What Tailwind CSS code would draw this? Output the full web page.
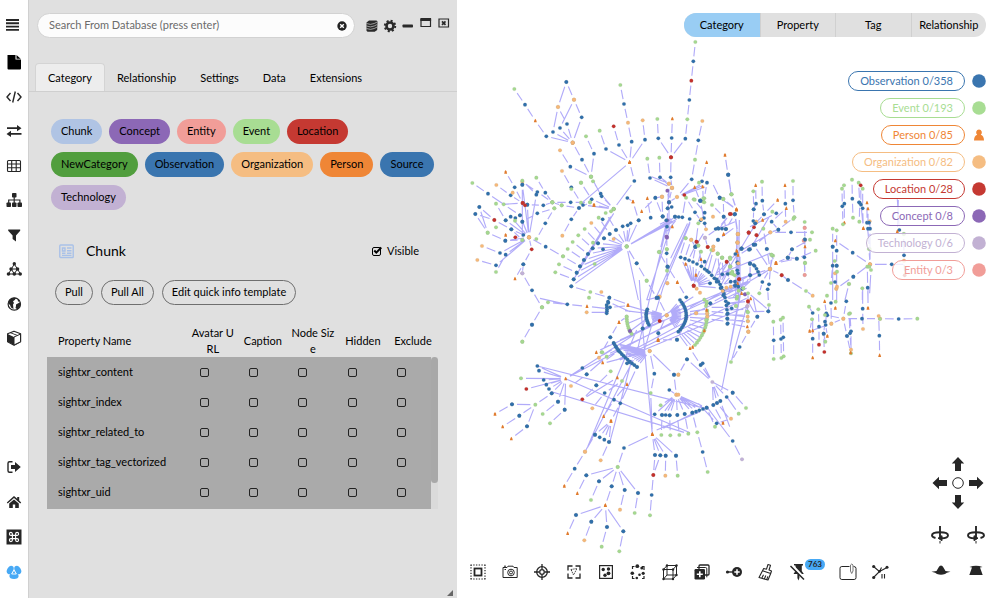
<!DOCTYPE html>
<html lang="en">
<head>
    <meta charset="UTF-8">
    <meta name="viewport" content="width=device-width, initial-scale=1.0">
    <title>Graph Explorer</title>
    <script src="https://cdn.jsdelivr.net/npm/@tailwindcss/browser@4"></script>
</head>
<body class="font-['Lato',sans-serif] text-[11px] text-black bg-white">
    <div class="flex h-screen overflow-hidden">

        <!-- icon rail -->
        <nav class="w-[29px] shrink-0 flex flex-col justify-between bg-white border-r border-[#d0d0d0] pt-4 pb-[17px] text-[#262626]">
            <div class="flex flex-col items-center gap-[19px]">
                <button aria-label="Menu" class="-ml-1"><svg class="size-[18px]" viewBox="0 0 18 18" stroke="currentColor" stroke-width="1.9"><path d="M3 4h13M3 7.300h13M3 10.600h13M3 13.900h13"/></svg></button>
                <div class="flex flex-col items-center justify-between h-[294px]">
                    <button aria-label="New file" class="text-black"><svg class="size-[18px]" viewBox="0 0 18 18" fill="currentColor"><path d="M2.500 2h8v4.500H16V15.500a1 1 0 0 1-1 1H3.500a1 1 0 0 1-1-1zM11.500 2l4.200 3.700H11.500z"/></svg></button>
                    <button aria-label="Code"><svg class="size-[18px]" viewBox="0 0 18 18" fill="none" stroke="currentColor" stroke-width="1.400"><path d="M5.500 5L2 9l3.500 4M12.500 5L16 9l-3.500 4M10.300 3.500L7.700 14.500"/></svg></button>
                    <button aria-label="Exchange"><svg class="size-[18px]" viewBox="0 0 18 18" fill="currentColor"><path d="M2 5.300h10V3l4.500 3.200L12 9.200V7H2zM16.500 11H6V8.800l-4.500 3.100L6 15v-2.300h10.500z"/></svg></button>
                    <button aria-label="Table"><svg class="size-[18px]" viewBox="0 0 18 18" fill="none" stroke="currentColor" stroke-width="1.100"><rect x="2.500" y="3.500" width="13" height="11" rx="1"/><path d="M2.500 7h13M2.500 10.700h13M6.700 3.500v11M11.200 3.500v11"/></svg></button>
                    <button aria-label="Hierarchy"><svg class="size-[18px]" viewBox="0 0 18 18" fill="currentColor"><rect x="7" y="2" width="4.500" height="4.500" rx=".8"/><rect x="1.500" y="11.500" width="4.500" height="4.500" rx=".8"/><rect x="7" y="11.500" width="4.500" height="4.500" rx=".8"/><rect x="12.500" y="11.500" width="4.500" height="4.500" rx=".8"/><path d="M3.700 12V9h11.200v3M9.200 6v6" fill="none" stroke="currentColor" stroke-width="1.200"/></svg></button>
                    <button aria-label="Filter"><svg class="size-[18px]" viewBox="0 0 18 18" fill="currentColor"><path d="M3.200 3.500h12v1.200L11 9.500v6L7.600 13V9.500L3.200 4.700z"/></svg></button>
                    <button aria-label="Network"><svg class="size-[18px]" viewBox="0 0 18 18" fill="currentColor"><path d="M9.300 4L3.500 14h12L9.300 4M6.300 9h6l-3 5z" fill="none" stroke="currentColor" stroke-width="1"/><circle cx="9.300" cy="3.700" r="1.700"/><circle cx="6" cy="9" r="1.700"/><circle cx="12.600" cy="9" r="1.700"/><circle cx="3.500" cy="14" r="1.800"/><circle cx="9.300" cy="14" r="1.800"/><circle cx="15.200" cy="14" r="1.800"/></svg></button>
                    <button aria-label="World"><svg class="size-[18px]" viewBox="0 0 18 18"><circle cx="9.300" cy="9" r="6.200" fill="none" stroke="currentColor" stroke-width="1.200"/><path fill="currentColor" d="M3.300 8.500C3.500 4.500 7 2.300 11 3L9.800 5 8 6.200 9 8 8 9.500 8.500 14 6 12.500 5 10zM11 9.500L15.500 7v3.500l-3 4-2-1.500.5-2zM12.500 3.500l2.500 2.500-2 .8z"/></svg></button>
                    <button aria-label="Cube"><svg class="size-[18px]" viewBox="0 0 18 18"><path d="M9 2.200L15.600 4.800v8L9 16.200 2.600 12.800v-8z" fill="#fff" stroke="currentColor" stroke-width="1.200" stroke-linejoin="round"/><path d="M9 8l6.500-2.900v7.700L9 16z" fill="#fff" stroke="currentColor"/><path fill="currentColor" d="M2.600 5L9 8v8l-6.400-3.400zM5 4l6.500 2.500 1-.5L6 3.500z"/></svg></button>
                </div>
            </div>
            <div class="flex flex-col items-center gap-[17px]">
                <button aria-label="Sign out"><svg class="size-[18px]" viewBox="0 0 18 18"><path d="M7.500 3.700H4.500Q3 3.700 3 5.200v7.600q0 1.500 1.500 1.500h3" fill="none" stroke="currentColor" stroke-width="1.400"/><path fill="currentColor" d="M6 7h4V4l5.800 5L10 14v-3H6z"/></svg></button>
                <button aria-label="Home"><svg class="size-[18px]" viewBox="0 0 18 18" fill="currentColor"><path d="M9 3l3.200 2.800V4h2v3.600l2 1.800-.9 1L9 5 2.700 10.400l-.9-1z"/><path d="M4.200 10.500L9 6.400l4.800 4.100V15h-3.600v-3.500H7.800V15H4.200z"/></svg></button>
                <button aria-label="Shortcuts"><svg class="size-[18px]" viewBox="0 0 18 18"><path fill="currentColor" d="M1.500 1.500h15v15h-15z"/><path d="M7.400 7.400h3.200v3.200H7.400zM7.400 7.400H5.900a1.500 1.500 0 1 1 1.500-1.500zM10.600 7.400V5.900a1.500 1.500 0 1 1 1.500 1.500zM10.600 10.600h1.500a1.500 1.500 0 1 1-1.500 1.500zM7.400 10.600v1.500a1.500 1.500 0 1 1-1.500-1.500z" fill="none" stroke="#fff" stroke-width="1.100"/></svg></button>
                <button aria-label="Assistant" class="text-[#47a9f5]"><svg class="size-[18px]" viewBox="0 0 18 18"><g fill="currentColor"><ellipse cx="5.200" cy="7" rx="3" ry="4.500" transform="rotate(28 5.200 7)"/><ellipse cx="12.800" cy="7" rx="3" ry="4.500" transform="rotate(-28 12.800 7)"/><ellipse cx="9" cy="13" rx="4.600" ry="2.900"/></g><path d="M9 7l2.300 4H6.700z" fill="currentColor" stroke="#fff" stroke-width=".9"/></svg></button>
            </div>
        </nav>

        <!-- side panel -->
        <section class="relative w-[428px] shrink-0 bg-[#e0e0e0]">
            <div class="flex items-center pl-2 pr-[6px] pt-[13px]">
                <div class="flex items-center flex-1 h-[25px] rounded-full bg-[#fcfcfc] border border-[#d2d2d2] pl-[11px] pr-[7px]">
                    <input type="text" aria-label="Search" placeholder="Search From Database (press enter)" class="flex-1 outline-none bg-transparent placeholder:text-[#6b6b6b]">
                    <button aria-label="Clear"><svg class="size-[10px]" viewBox="0 0 10 10"><circle cx="5" cy="5" r="4.700" fill="#222"/><path d="M3.200 3.200l3.600 3.600M6.800 3.200L3.200 6.800" stroke="#fff" stroke-width="1.400"/></svg></button>
                </div>
                <div class="flex items-center gap-1 ml-[10px] text-[#2a2a2a]">
                    <button aria-label="Databases"><svg class="size-[14px]" viewBox="0 0 14 14"><path fill="currentColor" d="M1.500 3.500L4 1.500h7.500l1 1-.3 8.500-2.500 1.800H2.500l-1-1z"/><path d="M1.500 4.500q4 1.800 7.700 0l3-1.500M1.500 7q4 1.800 7.700 0l3-1.500M1.500 9.500q4 1.800 7.700 0l3-1.500" fill="none" stroke="#ccc" stroke-width=".7"/></svg></button>
                    <button aria-label="Settings"><svg class="size-[14px]" viewBox="0 0 14 14"><circle cx="7" cy="7" r="3.500" fill="none" stroke="currentColor" stroke-width="2.600"/><circle cx="7" cy="7" r="5.200" fill="none" stroke="currentColor" stroke-width="2" stroke-dasharray="2.040 2.040"/></svg></button>
                    <button aria-label="Minimize"><svg class="size-[14px]" viewBox="0 0 14 14"><rect x="1.500" y="5.500" width="10.500" height="3" rx=".8" fill="currentColor"/></svg></button>
                    <button aria-label="Maximize" class="pb-[6px]"><svg class="size-[14px]" viewBox="0 0 14 14"><path d="M2 3.500h9.500v7H2z" fill="none" stroke="currentColor" stroke-width="1.200"/><path d="M1.400 3.500h10.700" stroke="currentColor" stroke-width="3"/></svg></button>
                    <button aria-label="Close" class="pb-[6px]"><svg class="size-[14px]" viewBox="0 0 14 14"><path d="M2 3h9.500v8H2z" fill="none" stroke="currentColor" stroke-width="1.200"/><path d="M5 5.300l3.500 3.500M8.500 5.300L5 8.800" stroke="currentColor" stroke-width="1.700"/></svg></button>
                </div>
            </div>

            <div role="tablist" class="flex mt-[25px] pl-[6px] border-b border-[#cfcfcf]">
                <button role="tab" aria-selected="true" class="h-7 px-3 pt-px -mb-px rounded-t bg-[#ededed] border border-b-0 border-[#d4d4d4]">Category</button>
                <button role="tab" class="h-7 px-3 pt-[2px]">Relationship</button>
                <button role="tab" class="h-7 px-3 pt-[2px]">Settings</button>
                <button role="tab" class="h-7 px-3 pt-[2px]">Data</button>
                <button role="tab" class="h-7 px-3 pt-[2px]">Extensions</button>
            </div>

            <div class="flex flex-wrap gap-x-[7px] gap-y-2 mt-[27px] pl-[22px] pr-4">
                <button class="h-[25px] px-[10px] rounded-full bg-[#b0c4e4]">Chunk</button>
                <button class="h-[25px] px-[10px] rounded-full bg-[#8c68b6]">Concept</button>
                <button class="h-[25px] px-[10px] rounded-full bg-[#f19d98]">Entity</button>
                <button class="h-[25px] px-[10px] rounded-full bg-[#a8dd93]">Event</button>
                <button class="h-[25px] px-[10px] rounded-full bg-[#c53932]">Location</button>
                <button class="h-[25px] px-[10px] rounded-full bg-[#519e3e]">NewCategory</button>
                <button class="h-[25px] px-[10px] rounded-full bg-[#3a75af]">Observation</button>
                <button class="h-[25px] px-[10px] rounded-full bg-[#f5bd82]">Organization</button>
                <button class="h-[25px] px-[10px] rounded-full bg-[#ef8636]">Person</button>
                <button class="h-[25px] px-[10px] rounded-full bg-[#3a75af]">Source</button>
                <button class="h-[25px] px-[10px] rounded-full bg-[#c2b1d3]">Technology</button>
            </div>

            <div class="flex items-center justify-between mt-[31px] pl-[30px] pr-[38px]">
                <div class="flex items-center gap-3">
                    <svg class="size-[15px]" viewBox="0 0 15 15" fill="none" stroke="#a9c1e8" stroke-width="1.400"><rect x=".8" y="1" width="13.400" height="12.500" rx=".8"/><path d="M3.500 4h2.500v3H3.500zM8 4h4.500M8 6.800h4.500M3 9.300h3.500M8 9.300h4.500M3 11.400h9.500"/></svg>
                    <h2 class="text-[14px] leading-5">Chunk</h2>
                </div>
                <label class="relative flex items-center gap-[6px]">
                    <input type="checkbox" checked class="appearance-none size-[9px] rounded-xs border border-black">
                    <svg class="absolute left-0 top-[3px] size-[10px]" viewBox="0 0 10 10"><path d="M2.300 4.500l2 2.200L9.300 1.500" fill="none" stroke="#000" stroke-width="1.900"/></svg>
                    Visible
                </label>
            </div>

            <div class="flex gap-2 mt-[19px] pl-[26px]">
                <button class="h-[25px] px-[9px] rounded-full border border-[#6f6f6f]">Pull</button>
                <button class="h-[25px] px-[9px] rounded-full border border-[#6f6f6f]">Pull All</button>
                <button class="h-[25px] px-[9px] rounded-full border border-[#6f6f6f]">Edit quick info template</button>
            </div>

            <div class="relative mt-5 ml-[18px] mr-[19px]">
                <table class="block">
                    <thead class="block">
                        <tr class="flex items-center leading-4">
                            <th class="w-[36%] pl-[11px] text-left font-normal">Property Name</th>
                            <th class="w-[12.8%] px-[3px] font-normal break-all">Avatar URL</th>
                            <th class="w-[12.8%] px-[3px] font-normal break-all">Caption</th>
                            <th class="w-[12.8%] px-[3px] font-normal break-all">Node Size</th>
                            <th class="w-[12.8%] px-[3px] font-normal break-all">Hidden</th>
                            <th class="w-[12.8%] font-normal">Exclude</th>
                        </tr>
                    </thead>
                    <tbody id="props" class="block h-[152px] overflow-hidden mr-[7px] bg-[#aaaaaa]"></tbody>
                </table>
                <div class="absolute right-0 bottom-0 w-[7px] h-[152px] bg-[#dadada]">
                    <div class="h-[126px] rounded-full bg-[#a8a8a8]"></div>
                </div>
            </div>

            <svg class="absolute right-1 bottom-[2px] size-[6px]" viewBox="0 0 6 6"><path d="M6 0v6H0z" fill="#666"/></svg>
        </section>

        <!-- graph view -->
        <main class="relative flex-1 flex flex-col justify-between">
            <svg id="graph" class="absolute inset-0 size-full" viewBox="-9 0 1629 1794" preserveAspectRatio="xMinYMin meet"></svg>

            <div class="relative flex flex-col items-end pt-[13px] pr-[14px]">
                <div class="grid grid-cols-4 w-[302px] h-6 rounded-full overflow-hidden bg-[#e0e0e0]">
                    <button class="bg-[#99cdf4]">Category</button>
                    <button class="border-l border-[#d0d0d0]">Property</button>
                    <button class="border-l border-[#d0d0d0]">Tag</button>
                    <button class="border-l border-[#d0d0d0]">Relationship</button>
                </div>
                <ul id="legend" class="flex flex-col items-end gap-[7px] mt-[34px] leading-[18px]"></ul>
            </div>

            <div class="relative flex items-end justify-between pl-[5px] pr-[15px] pb-[17px] text-[#262626]">
                <div class="flex items-center">
                    <button aria-label="Select area" class="w-8 flex justify-center"><svg class="size-[18px]" viewBox="0 0 18 18" fill="none" stroke="currentColor"><path d="M1.500 2h15M1.500 16h15M2 1.500v15M16 1.500v15" stroke-width="1.200" stroke-dasharray="1.400 1.320"/><rect x="5.500" y="5.500" width="7" height="7" stroke-width="1.800"/></svg></button>
                    <button aria-label="Snapshot" class="w-8 flex justify-center"><svg class="size-[18px]" viewBox="0 0 18 18" fill="none" stroke="currentColor"><path d="M2 4.500h4l1-1.300h5l1 1.300h3.200v10H2z"/><path d="M3 3.200h2"/><circle cx="10" cy="9.500" r="3.300"/><circle cx="10" cy="9.500" r="1.500"/><path d="M3.500 6.500h1.500"/></svg></button>
                    <button aria-label="Center" class="w-8 flex justify-center"><svg class="size-[18px]" viewBox="0 0 18 18" fill="none" stroke="currentColor" stroke-width="1.300"><circle cx="9" cy="9" r="5.300"/><circle cx="9" cy="9" r="2.300"/><path d="M9 1v5M9 12v5M1 9h5M12 9h5"/></svg></button>
                    <button aria-label="Fit selection" class="w-8 flex justify-center"><svg class="size-[18px]" viewBox="0 0 18 18" fill="none" stroke="currentColor" stroke-width="1.300"><path d="M7.500 3H3v4.500M10.500 3H15v4.500M7.500 15H3v-4.500M10.500 15H15v-4.500"/><path d="M6 6.500l6-1-3.500 6.500zM6 6.500l1 2" stroke-width=".8" stroke-dasharray="1.500 .7"/></svg></button>
                    <button aria-label="Fit graph" class="w-8 flex justify-center"><svg class="size-[18px]" viewBox="0 0 18 18" fill="none" stroke="currentColor" stroke-width="1.200"><rect x="2.600" y="2.600" width="12.800" height="12.800"/><g fill="currentColor" stroke="none"><circle cx="6.200" cy="6.500" r="1.700"/><circle cx="11.500" cy="6" r="1.700"/><circle cx="11.500" cy="10.300" r="1.900"/><circle cx="8" cy="12.200" r="1.700"/></g></svg></button>
                    <button aria-label="Expand selection" class="w-8 flex justify-center"><svg class="size-[18px]" viewBox="0 0 18 18" fill="none" stroke="currentColor" stroke-width="1.200"><path d="M5.500 3.500H3.500V6M13 3.500h2V7M5.500 15.500H3.500v-2.500M13 15.500h2V13"/><g fill="currentColor" stroke="none"><circle cx="8.300" cy="3.200" r="1.900"/><circle cx="12.800" cy="5" r="1.500"/><circle cx="3.300" cy="10.300" r="1.800"/><circle cx="14.200" cy="10.300" r="1.600"/><circle cx="7.800" cy="15" r="1.300"/><circle cx="10.500" cy="11.800" r="1.300"/></g></svg></button>
                    <button aria-label="3D view" class="w-8 flex justify-center"><svg class="size-[18px]" viewBox="0 0 18 18" fill="none" stroke="currentColor" stroke-width="1"><path d="M2.500 6.500h9.500V16H2.500zM6 2.500h9.500V12H6zM2.500 6.500L6 2.500M12 6.500l3.500-4M12 16l3.500-4M2.500 16L6 12"/><g fill="currentColor" stroke="none"><circle cx="2.500" cy="6.500" r="1.200"/><circle cx="12" cy="6.500" r="1.200"/><circle cx="2.500" cy="16" r="1.200"/><circle cx="12" cy="16" r="1.200"/><circle cx="6" cy="2.500" r="1.200"/><circle cx="15.500" cy="2.500" r="1.200"/><circle cx="15.500" cy="12" r="1.200"/></g></svg></button>
                    <button aria-label="Duplicate" class="w-8 flex justify-center"><svg class="size-[18px]" viewBox="0 0 18 18" fill="none" stroke="currentColor" stroke-width="1.300"><rect x="6" y="2" width="10" height="10" rx="1" fill="#fff"/><path d="M4 4.500h8.500q1.300 0 1.300 1.300v8.500" stroke-width="1"/><rect x="1.500" y="6" width="10.500" height="10.500" rx="1.200" fill="currentColor" stroke="none"/><path d="M6.800 8.300v6M3.800 11.300h6" stroke="#fff" stroke-width="1.600"/></svg></button>
                    <button aria-label="Add node" class="w-8 flex justify-center"><svg class="size-[18px]" viewBox="0 0 18 18"><circle cx="2.500" cy="9" r="1.600" fill="currentColor"/><path d="M2 9h6" stroke="currentColor" stroke-width="1.400"/><circle cx="12" cy="9" r="5" fill="currentColor"/><path d="M12 6.300v5.400M9.300 9h5.400" stroke="#fff" stroke-width="1.500"/></svg></button>
                    <button aria-label="Clean up" class="w-8 flex justify-center"><svg class="size-[18px]" viewBox="0 0 18 18" fill="none" stroke="currentColor" stroke-width="1.100" stroke-linejoin="round"><path d="M11 1.500l2.500.8L12 7l2.500 1-.8 2.500-8.200-2.800 1.200-2.200L9.500 6.200zM5.500 7.700L2 14.500l9 2.500 2.700-6.500M5 14.800l1.500-3M7.500 15.500l1.300-3M9.800 16.300l1-3"/></svg></button>
                    <button aria-label="Unpin" class="relative w-8 flex justify-center"><svg class="size-[18px]" viewBox="0 0 18 18"><path fill="currentColor" d="M5 1h9v1.500h-1.200V8l2 3H10.400v4l-1 2.500-1-2.500v-4H4.500l2-3V2.500H5z"/><path d="M3 2L16.500 16.500" stroke="#fff" stroke-width="2.400"/><path d="M1.500 3L15 16.500" stroke="currentColor" stroke-width="1.500"/></svg>
                        <span class="absolute left-[23px] -top-1 px-[3px] h-[11px] rounded-full bg-[#47a9f5] text-[8px] leading-[11px] font-bold">763</span>
                    </button>
                    <button aria-label="Note" class="w-8 ml-[18px] flex justify-center"><svg class="size-[18px]" viewBox="0 0 18 18" fill="none" stroke="currentColor"><path d="M10.500 3.500H2.800q-1.800 0-1.800 1.800v9.400q0 1.800 1.800 1.800h12.400q1.800 0 1.800-1.800V5.300q0-1.800-2.500-1.800"/><path d="M11.500 2v6l1.200 2.500L14 8V2q-1.200-2-2.500 0z" stroke="#777" stroke-width="1"/></svg></button>
                    <button aria-label="Pause layout" class="w-8 flex justify-center"><svg class="size-[18px]" viewBox="0 0 18 18" stroke="currentColor" stroke-width="1.100"><path d="M2.500 3.500L8.500 8.500 2.500 14.500M8.500 8.500L16 4.500M8.500 8.500l2-4M11 11v4.500M13.500 11v4.500" fill="none"/><g fill="currentColor" stroke="none"><circle cx="2.700" cy="3.500" r="1.600"/><circle cx="2.700" cy="14.500" r="1.600"/><circle cx="16" cy="4.300" r="1.500"/><circle cx="8.500" cy="8.500" r="1.300"/></g></svg></button>
                </div>

                <div class="w-[54px] flex flex-col">
                    <div class="grid grid-cols-3 gap-y-px justify-items-center items-center">
                        <button aria-label="Pan up" class="col-start-2"><svg class="size-[18px]" viewBox="0 0 18 18" fill="currentColor"><path d="M9 2l6.200 6.500H12V16H6V8.500H2.800z"/></svg></button>
                        <button aria-label="Pan left" class="col-start-1"><svg class="size-[18px]" viewBox="0 0 18 18" fill="currentColor"><path d="M1.500 9L8 2.800V6h8v6H8v3.200z"/></svg></button>
                        <button aria-label="Reset view"><svg class="size-[14px]" viewBox="0 0 14 14"><circle cx="7" cy="7" r="5.300" fill="#fff" stroke="currentColor"/></svg></button>
                        <button aria-label="Pan right"><svg class="size-[18px]" viewBox="0 0 18 18" fill="currentColor"><path d="M16.500 9L10 2.800V6H2v6h8v3.200z"/></svg></button>
                        <button aria-label="Pan down" class="col-start-2"><svg class="size-[18px]" viewBox="0 0 18 18" fill="currentColor"><path d="M9 16L2.800 9.500H6V2h6v7.500h3.200z"/></svg></button>
                    </div>
                    <div class="flex justify-between mt-[15px]">
                        <button aria-label="Rotate left"><svg class="size-[18px]" viewBox="0 0 18 18" fill="none" stroke="currentColor" stroke-width="1.900"><path d="M9 0v13"/><path d="M4.500 12Q1 11 1 9.200C1 7 5 6.200 9 6.200s8 .8 8 3-3 3-6.500 3"/><path d="M7 12.200l4-2.500v5zM9 15v2.500" fill="currentColor" stroke-width="1"/></svg></button>
                        <button aria-label="Rotate right"><svg class="size-[18px]" viewBox="0 0 18 18" fill="none" stroke="currentColor" stroke-width="1.900"><path d="M9 0v13"/><path d="M13.500 12Q17 11 17 9.200C17 7 13 6.200 9 6.200s-8 .8-8 3 3 3 6.500 3"/><path d="M11 12.200l-4-2.500v5zM9 15v2.500" fill="currentColor" stroke-width="1"/></svg></button>
                    </div>
                    <div class="flex justify-between mt-[19px]">
                        <button aria-label="Tilt down"><svg class="h-[18px] w-[20px]" viewBox="0 0 20 18" fill="currentColor"><path d="M10 2.500q1.500 0 2.300 1.800L14.500 8l5 .8q-4.500 1-5.500 2.200-4 1.500-8 0Q5 9.800.5 8.800L5.500 8l2.200-3.700Q8.500 2.500 10 2.500z"/></svg></button>
                        <button aria-label="Tilt up"><svg class="size-[18px]" viewBox="0 0 18 18" fill="currentColor"><path d="M2.500 4Q9 1.500 15.500 4l-2.500.6 2.700 7.400H2.300l2.700-7.400z"/></svg></button>
                    </div>
                </div>
            </div>
        </main>
    </div>

    <script>
        const colors = {
            b: '#2f6fab', g: '#a5d98f', o: '#f6b878', p: '#e07a2c',
            r: '#c4302b', c: '#8560b5', t: '#c2b1d8', e: '#ef9a96'
        };

        // legend
        const legend = [
            ['Observation', '0/358', '#3a75af'],
            ['Event', '0/193', '#a8dd93'],
            ['Person', '0/85', '#ef8636'],
            ['Organization', '0/82', '#f5bd82'],
            ['Location', '0/28', '#c53932'],
            ['Concept', '0/8', '#8c68b6'],
            ['Technology', '0/6', '#c2b1d3'],
            ['Entity', '0/3', '#f19d98']
        ];
        document.getElementById('legend').innerHTML = legend.map(([name, count, color]) => {
            const icon = name === 'Person'
                ? '<path d="M7 1.500a3 3 0 0 1 1.800 5.300Q12 8 12 12.500H2Q2 8 5.200 6.800A3 3 0 0 1 7 1.500z"/>'
                : '<circle cx="7" cy="7" r="6.800"/>';
            return `<li class="flex items-center gap-[7px]">
                <button class="px-[11px] rounded-full border bg-white/80" style="color:${color};border-color:${color}">${name} ${count}</button>
                <svg class="size-[14px]" viewBox="0 0 14 14" fill="${color}">${icon}</svg>
            </li>`;
        }).join('');

        // property rows
        const props = ['sightxr_content', 'sightxr_index', 'sightxr_related_to', 'sightxr_tag_vectorized', 'sightxr_uid'];
        const flags = ['Avatar URL', 'Caption', 'Node Size', 'Hidden', 'Exclude'];
        document.getElementById('props').innerHTML = props.map(name => `
            <tr class="flex items-center h-[30px] pr-[5px]">
                <td class="w-[35%] pl-[11px]">${name}</td>
                ${flags.map(f => `<td class="w-[13%] flex justify-center"><input type="checkbox" aria-label="${name} ${f}" class="appearance-none size-[9px] rounded-xs border border-[#222]"></td>`).join('')}
            </tr>`).join('');

        // Graph data: "a b c" is a chain, "hub > a b c" is a fan, "* a b" are loose nodes.
        // Tokens are type + x,y; ~type:count:start:control:end puts nodes along a curve, x is a point without a node.
        const clusters = [
            { at: [0, 0], data: `
                g163,267 b195,314 p226,362 b259,409 o338,428
                b319,246 o294,321 b279,396 o338,428
                b319,246 o342,299 b365,352 o338,428
                o342,299 b300,384 o338,428
                o294,321 b321,372 o338,428 b366,479 g393,530 b425,589 g461,627
                g378,409 b402,461 g393,530
                o300,451 b331,500 g393,530
                g481,255 b492,312 o504,368 b515,425 p509,487 b523,543 g461,627
                g419,392 b438,447 p509,487 x370,605
                r461,379 b477,435 p509,487
                o548,361 b555,419 p509,487
                g592,357 b595,415 r633,472
                p637,356 b635,414 r633,472 b632,532 o636,564
                g706,126 b700,184 r694,242 b688,300 g682,358 b676,416 r633,472
                o727,363 b715,421 g705,479 b695,538 o651,591
                g562,476 b570,534 o636,564
                g598,473 b600,532 o636,564
                o306,513 b334,562 g363,608
                g363,548 b395,598 g461,627
                g399,544 b422,581 g461,627
                g305,616 b357,624 g390,607
                b369,615 g461,627
                p402,615 g461,627
                o307,707 b334,658 b357,624
                g500,739 > b334,859 b341,838 b350,818 b360,799 b372,780 b384,762 b398,745 b414,730 b432,715 b449,702 b468,690 b488,679 b503,676 b512,670 b536,661 x640,655 x636,662 x632,668
                g286,817 b341,838
                g297,793 b350,818
                g309,769 b360,799
                g323,747 b372,780
                g338,726 b384,762
                g355,706 b398,745
                g374,687 b414,730
                o394,669 b432,715
                g416,653 b449,702
                g437,639 b468,690
                x461,640 x341,838
                x452,650 x360,799
                b334,859 g391,876 b448,893
                g500,739 b530,790 g560,842 b590,893
                g500,739 x535,900
                p519,605 b536,661
                b502,594 p519,605
                p545,634 b586,594 o606,590
                p562,595 b572,653
                o606,590 b608,650
                p740,487 b726,544
                p795,465 b804,524 x813,580
                * g363,548 b428,658 b429,748 o461,717 g404,792 g399,728 g453,634 g334,567 p402,615 g387,893 o424,876
                g597,756 b622,800 o622,850
                o598,890 x560,900 x632,680
                x585,900 x690,665
                p652,847 b623,800
            ` },
            { at: [0, 480], data: `
                g37,69 b84,101 x131,133 r188,129
                p137,36 b164,82 r188,129
                o109,75 b152,106 r188,129
                o187,65 b232,96 g277,127
                g187,62 b229,104 o207,232
                g229,53 b256,98 g277,127
                g277,127 b250,136 b202,134
                g277,127 b332,127 g390,127
                g283,145 b232,160 b187,185
                g283,145 b256,190 g229,237
                g305,136 g277,127
                b58,141 g83,218
                b46,162 g83,218 b136,242 g187,240
                b58,141 r103,180 b154,208 g187,240
                b46,162 r103,180
                g108,131 b137,181
                g131,133 b180,166
                o207,232 > b187,74 b202,134 b152,170 b180,166 b137,181 b154,208 b187,185 b136,242
                o66,258 b120,279 o207,232
                o52,300 b108,316 o207,232
                g108,336 b137,284 o207,232
                o207,232 b257,260 g309,289
                o207,232 r215,268 b190,313 p165,356
                b187,74 x187,230
                t187,340 b216,391 g246,442
                t187,340 b190,313
                * r188,129 r195,136 r166,232 o158,98 g108,202 p137,225 b166,174 g165,182 b190,225
                g246,442 b216,494 g187,545
            ` },
            { at: [570, 495], data: `
                o81,96 > b58,111 x150,60 x157,62 x165,66
                o57,56 > x5,35 x30,37 b53,130 c57,112
                b235,29 g244,88 p259,133
                c52,77 b57,112 b53,130 b51,185 c50,215 g51,253
                o66,68 c57,112 x57,200
                b16,98 b38,154
                g108,98 b135,142 b152,166
                p134,67 b150,107
                p158,65 g160,110
                b171,53 g163,100 b152,107
                g107,219 o124,224 b136,245
                b119,162 x62,280
                b151,107 b164,175 o168,193 b136,245
                b209,98 g220,102 p259,133
                x190,60 b209,98
                b204,190 t165,218 o173,246
                g186,120 b221,155 b228,192
                r240,147 b204,190
                b254,148 b228,192
                o264,208 b254,148
                x30,178 b75,155
                b86,156 x50,200
                b97,157 x105,110
                x0,205 x80,163
                x0,207 x70,170
                g131,103 b164,143
                g145,175 b136,245
                g29,261 x50,170
                * r103,90 b151,107 o57,56 g147,53 g134,104 g163,112 p67,185 b65,126 o36,96 c50,215 g160,100 b162,159 o154,163 o189,155 r141,231 r173,246 g145,241 o188,256 o190,245 p221,208 b204,225 o262,232 g184,255 b38,154 b75,155 b57,112 c52,166 b49,166
            ` },
            { at: [765, 510], data: `
                b40,14 g49,73 p64,119 b59,133 o68,192
                g141,35 b142,92 b147,133
                p122,46 b123,101 b116,118
                g115,64 b116,118 b115,153
                g234,33 b234,91 g238,142
                p210,46 b211,101 o212,155
                p188,90 b147,133 b121,160
                g172,125 b105,238
                b184,130 x105,170
                p214,115 b170,155 b190,179
                g291,187 b228,187 o166,187 b121,224 x80,250
                g238,142 b190,179 o166,187
                x85,238 x165,190
                g145,176 b155,237 p183,279
                g302,242 b245,266 p183,279
                g285,209 b231,238 b218,263
                p183,279 b218,263
                g269,156 e269,173 b269,208 p270,230 b268,262 e269,315
                b14,83 x55,112
                b26,140 g25,87
                x7,178 x60,155
                r45,132 x10,180
                b9,209 x55,175
                o68,192 o67,218 p66,245 b68,279 b67,301 x68,345
                g174,257 o165,297 b116,224
                o165,297 x30,342
                o165,297 r200,315 b219,330
                x5,315 x165,250
                o165,297 x60,330
                b105,281 x105,330
                b79,236 x5,310
                x20,330 x120,165
                g8,251 x15,320
                g21,263 x25,320
                g45,263 x40,320
                x75,260 x75,350
                * ~b:4:2,177:15,175:32,177 p26,193 g25,87 o124,155 p143,150 b121,160 r117,172 r101,187 r124,195 b102,239 g169,254 r35,275 g8,251 g21,263 g45,263 g46,289 b105,281 b116,285 ~b:4:119,288:128,300:133,315 b105,315 o270,210 g270,278 e266,212 b22,313 g46,310 g235,147 b38,312 b116,224 b79,236 r73,327
            ` },
            { at: [420, 660], data: `
                o200,286 > ~b:16:240,240:280,290:235,335 ~b:10:142,268:133,290:147,315
                o200,286 > b174,233 x440,185
                x0,390 x445,185
                x30,400 x440,205
                x50,420 x440,235
                x90,395 x250,310
                x60,360 x190,300
                x180,285 x80,256
                x180,285 x75,272
                x130,290 x85,310
                x135,300 x95,330
                r281,197 > b242,112 b255,116 b267,121 b279,126 b291,132 b304,139 b314,147 b321,152 b327,157 b335,166 b343,175 b350,185 b362,204 b330,190
                p257,132 r281,197 ; x290,165 r281,197
                x200,20 x110,400
                x270,10 x190,200 x130,400
                g257,55 x243,100
                o273,60 x258,105
                x290,70 x270,110
                b287,80 x280,115
                g303,95 x295,125
                g295,77 x305,130
                x333,95 x315,140
                o340,90 x325,148
                g353,101 x335,160
                g367,113 x345,170
                g391,117 x352,180
                r380,126 x355,190
                g391,140 x362,198
                g398,162 b362,204
                b412,127 b406,196
                ~b:13:350,178:384,220:382,312
                x385,300 x430,302
                x385,285 x430,285
                x385,270 x430,268
                x385,250 x420,245
                x385,235 x420,230
                x385,215 x425,205
                x335,275 x370,278
                x335,285 x370,290
                x335,298 x370,303
                x335,262 x370,262
                ~g:14:322,272:325,330:285,375
                x270,262 x310,240
                x270,275 x315,268
                x270,282 x315,282
                x270,292 x315,295
                x270,300 x315,310
                x268,312 x312,325
                x265,322 x305,340
                x262,330 x298,350
                x257,335 x290,360
                x252,340 x282,368
                x246,344 x272,375
                x240,348 x262,378
                ~g:9:80,290:80,320:95,342
                ~b:5:20,255:22,268:20,280
                b28,233 x75,250
                b30,262 x75,258
                b24,245 x90,275
                b31,352 p57,307 g80,290
                g80,80 b110,130 g140,182 b170,234
                x118,180 x127,320
                g200,87 c201,53
                b200,100 g201,152 o202,189
                b203,140 p232,187 b259,232
                p174,360 b175,340 o200,286
                p174,360 b231,359 x265,290
                b331,250 x440,190
                x310,250 x450,165
                x418,0 x415,260
                x411,20 x407,230
                x440,260 x395,420
                x60,420 x440,260
                * r179,303 c90,333 p84,255 o289,279 o300,218 o290,206 o322,290 o321,281 o179,230 b128,325 g313,239 p319,251 r289,65 r323,81 t315,54 o340,80 g177,96 p303,118 p288,165 b314,125 c435,223 r444,245 t442,258 g442,275 o443,290 g443,303 o445,335 g410,236 g408,258 g397,155 o368,213 o379,203 r417,178 p413,190 g416,212 b406,196 b427,206 p410,92 b425,86 o413,67 o414,42 r446,38 g318,258 b370,226 b174,233
            ` },
            { at: [810, 0], data: `
                g366,539 b367,596 g369,653
                g342,556 b343,611 p343,668
                g336,566 b337,619 g339,673
                g386,548 b389,608 g388,665
                r392,556 b393,614 p400,685
                g398,566 b398,625 p400,685
                p411,608 b411,668 g419,747
                p414,626 b414,686 g417,747 o420,793
                o419,664 b420,686 o420,793
                b508,690 x502,598
                p502,694 x505,600
                g521,702 b522,766 o522,782 r524,826
                g308,686 b308,740 p308,796 g303,849
                g320,691 b320,752 b320,797 o319,866
                p316,722 b368,758 o420,793 b485,793 x520,793
                o420,793 b370,830 o319,866
                g412,800 b413,863 x414,900
                g423,810 x419,880
                g357,852 x345,900
                g397,865 x397,900
                b308,740 x308,900
                b320,797 x320,900
                e224,684 b225,719 g225,790 e224,825
                r155,826 b174,840 g228,873 o248,887
                b60,790 b61,826 g40,865
                g125,765 b117,853 b113,868 x115,900
                o120,807 b97,846 g88,880
                p20,629 b15,642 o24,702 o23,728 b16,762 b24,790
                b186,748 b174,773 b201,776
                b111,747 o120,807
                g5,583 p20,629
                x5,875 x125,805
                x10,890 x60,845
                p24,765 b24,820 b25,860 g22,890
                * r27,838 b15,845 b15,858 g40,865 c45,883 p35,880 p62,896 p138,789 b58,748 b35,745 r56,698 r80,706 r3,642 b308,797 g314,783 o315,820 g321,815 o321,860 g291,887 b387,607 b417,668 g357,852 b370,830 b315,846 g6,820 g0,800 b2,845 g14,826 o2,860 g522,702 g418,800 o25,790
            ` },
            { at: [0, 900], data: `
                g264,7 b322,13 p381,19 x435,25
                o380,37 x435,37
                g246,22 b216,74 g187,125
                x320,13 x240,-5
                o569,153 > ~b:14:461,129:480,165:531,201 x440,187
                o569,153 b583,221 g572,279 p577,403
                o569,153 b642,224 o649,284 b628,270
                o655,224 b642,224
                x540,0 x577,403
                p477,67 b451,112 g425,157
                b461,129 p409,157
                b468,141 o417,173
                b475,152 p428,188
                p317,236 > b232,198 b237,212 b251,240 b259,254 b267,267 b275,280 b294,305 b314,329 r199,267 g183,235 x700,-10 x650,60 b367,204
                x232,198 x735,325
                x275,275 x672,397
                x317,236 x690,398
                g226,314 > b156,313 b178,347 b201,379 b275,280
                b156,313 p105,342
                b178,347 p128,380
                b201,379 p154,416
                b294,305 g248,342
                b314,329 g270,370
                b380,223 o333,258
                b380,223 g440,170
                p472,233 r367,298 b409,256
                g452,214 b409,256
                g486,243 b434,279 o397,325
                p501,253 b462,299 p431,349
                b531,201 b481,310 p453,363
                p453,363 > b405,404 b419,412 b433,419 b447,426
                x530,90 x383,440
                x520,180 x378,450
                x515,180 x450,425
                b405,404 o375,455
                b447,426 o422,481
                o375,455 b344,506 p313,558
                p577,403 b492,444 g473,501
                g473,501 > b379,526 b417,544 b455,559 b494,570 b534,579
                b379,526 p352,580
                b417,544 g393,600
                b494,570 o480,629
                b534,579 g524,639
                b455,559 p436,616
                p436,616 > b348,645 b394,665 b441,681 b490,694
                b348,645 p323,700
                b394,665 o373,721
                b441,681 g425,740
                b490,694 g478,754
                p577,403 > b585,465 b601,466 b617,467 b648,467
                b585,465 r580,525 b575,585 g570,646
                b601,466 r580,525
                b617,467 o616,527
                b648,467 g653,527
                o649,284 > g602,316 b584,343 b606,345 b617,345 b629,346 b652,345 b674,342 b697,338 b708,335 b718,331 b729,327 b740,323
                b606,345 g604,405
                b629,346 g631,406
                b652,345 g658,405
                b674,342 g685,401
                b697,338 g712,397 b728,456 g743,516
                x720,335 x590,390
                x700,340 x610,385
                t757,246 > b681,178 b722,195 b728,190 b760,315 b771,309 b781,303 b800,291
                b722,195 p690,145
                b681,178 o655,224
                b740,323 g765,380
                b760,315 p789,369
                b771,309 x805,352
                b781,303 x809,380
                x785,270 x850,-60
                * p595,120 b651,119 b595,99 b548,86 p698,141 g740,10 p733,92 g738,60 r599,63 c510,93 b501,190 b507,187 o655,284 b751,10 o708,40 p740,30 p504,16 b445,8 g427,157
            ` },
            { at: [810, 900], data: `
                b8,278 g48,324
                x-10,290 g26,341
                x-53,246 b8,278
                x-95,310 b-40,370 o3,356
                x-70,320 b8,423 t36,478
                b82,50 o55,95 b29,141 g3,186
                g130,65 b131,121 g131,177
                g152,59 b153,117 g154,174
                g159,53 b160,112 g161,169
                x110,25 x62,-15
                b115,34 x72,35
                x72,35 x55,5
                g117,15 b115,34
                x5,10 x45,5
                x5,45 x45,50
                x5,60 x45,65
                x5,72 x45,80
                x30,-20 x0,140
                g54,-20 r54,3 t52,19 g54,37 o54,64 p52,80 o55,95
                x70,-5 b82,50
                g237,20 b248,39 b248,116 p248,173
                g246,58 p239,93
                g265,28 b267,80 r267,134
                p284,4 b289,40 b287,75 p292,108
                b285,65 b281,101 r283,156
                g286,125 b281,101
                b303,9 o304,71 x250,90
                o340,56 > b292,46 o304,71 b349,4 b351,108
                o340,56 b396,56 o450,56 b506,57 g562,56
                g360,40 b363,94 g363,160
                g357,42 b360,100 o363,149
                b351,108 p362,158
                x398,-35 b398,26 o399,87
                x414,-40 p414,24
                o446,48 b448,107 p449,166
                * g450,57 g317,5 p316,24 g285,45 p248,92 g18,18 b5,25 b-5,10 b-7,40 b-7,70 g-70,5 b-8,55
            ` }
        ];

        const edges = [];
        const nodes = [];

        function expand(token, at) {
            if (token[0] === '~') {
                const [type, count, ...pts] = token.slice(1).split(':');
                const [a, c, b] = pts.map(p => p.split(',').map(Number));
                return Array.from({ length: +count }, (_, i) => {
                    const t = i / (count - 1), u = 1 - t;
                    return {
                        type,
                        x: at[0] + u * u * a[0] + 2 * u * t * c[0] + t * t * b[0],
                        y: at[1] + u * u * a[1] + 2 * u * t * c[1] + t * t * b[1]
                    };
                });
            }
            const [x, y] = token.slice(1).split(',').map(Number);
            return [{ type: token[0], x: x + at[0], y: y + at[1] }];
        }

        function link(a, b) {
            const dx = b.x - a.x, dy = b.y - a.y, len = Math.hypot(dx, dy);
            if (len < 18) return;
            const padA = a.type === 'x' ? 0 : Math.min(15, len * .28);
            const padB = b.type === 'x' ? 0 : Math.min(15, len * .28);
            edges.push(`M${(a.x + dx * padA / len).toFixed(1)} ${(a.y + dy * padA / len).toFixed(1)}L${(b.x - dx * padB / len).toFixed(1)} ${(b.y - dy * padB / len).toFixed(1)}`);
        }

        clusters.forEach(({ at, data }) => {
            data.split(/[\n;]/).map(l => l.trim()).filter(Boolean).forEach(line => {
                const tokens = line.split(/\s+/);
                const pts = tokens.filter(t => t !== '>' && t !== '*').flatMap(t => expand(t, at));
                if (tokens[1] === '>') pts.slice(1).forEach(p => link(pts[0], p));
                else if (tokens[0] !== '*') pts.slice(1).forEach((p, i) => link(pts[i], p));
                nodes.push(...pts.filter(p => p.type !== 'x'));
            });
        });

        document.getElementById('graph').innerHTML =
            `<path d="${edges.join('')}" fill="none" stroke="#a39cf8" stroke-opacity=".85" stroke-width="3.4"/>` +
            nodes.map(({ type, x, y }) => type === 'p'
                ? `<path d="M${x} ${y - 6}l2.500 4 2 7h-9l2-7z" fill="${colors.p}"/>`
                : `<circle cx="${x}" cy="${y}" r="5.500" fill="${colors[type]}" stroke="#8a8a8a" stroke-opacity=".35"/>`).join('');
    </script>
</body>
</html>
